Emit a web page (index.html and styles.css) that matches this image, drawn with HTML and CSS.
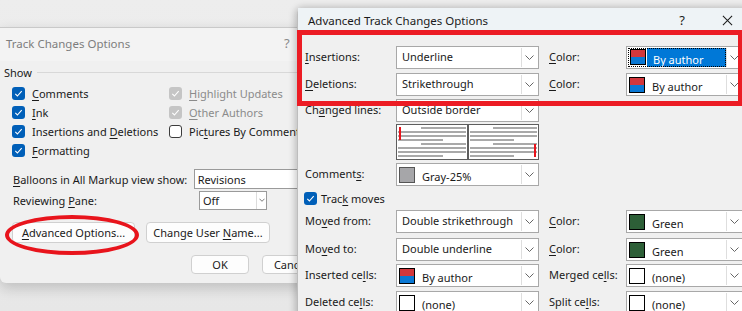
FILE: index.html
```html
<!DOCTYPE html>
<html lang="en">
<head>
  <meta charset="UTF-8" />
  <title>Track Changes Options</title>
  <link rel="stylesheet" href="styles.css">
</head>
<body>
  <div class="desktop">

    <!-- back window: Track Changes Options -->
    <section class="dlg dlg-back">
      <header class="tb tb-back">
        <span class="tb-title">Track Changes Options</span>
        <span class="tb-help">?</span>
      </header>
      <div class="back-body">
        <div class="group-head"><span>Show</span><i class="rule"></i></div>
        <div class="show-grid">
          <div class="chk"><span class="box on"><svg viewBox="0 0 13 13"><path d="M3.3 6.9l2.1 2.1 4.3-4.8"/></svg></span><span><u>C</u>omments</span></div>
          <div class="chk dis"><span class="box dim"><svg viewBox="0 0 13 13"><path d="M3.3 6.9l2.1 2.1 4.3-4.8"/></svg></span><span><u>H</u>ighlight Updates</span></div>
          <div class="chk"><span class="box on"><svg viewBox="0 0 13 13"><path d="M3.3 6.9l2.1 2.1 4.3-4.8"/></svg></span><span><u>I</u>nk</span></div>
          <div class="chk dis"><span class="box dim"><svg viewBox="0 0 13 13"><path d="M3.3 6.9l2.1 2.1 4.3-4.8"/></svg></span><span><u>O</u>ther Authors</span></div>
          <div class="chk"><span class="box on"><svg viewBox="0 0 13 13"><path d="M3.3 6.9l2.1 2.1 4.3-4.8"/></svg></span><span>Insertions and <u>D</u>eletions</span></div>
          <div class="chk"><span class="box off"></span><span>Pic<u>t</u>ures By Comments</span></div>
          <div class="chk"><span class="box on"><svg viewBox="0 0 13 13"><path d="M3.3 6.9l2.1 2.1 4.3-4.8"/></svg></span><span><u>F</u>ormatting</span></div>
        </div>

        <div class="field-row first">
          <span class="field-lbl"><u>B</u>alloons in All Markup view show:</span>
          <div class="combo-s wide"><span class="val">Revisions</span></div>
        </div>
        <div class="field-row">
          <span class="field-lbl">Reviewing <u>P</u>ane:</span>
          <div class="combo-s small">
            <span class="val">Off</span>
            <span class="drop-s"><svg viewBox="0 0 7 4"><path d="M0.5 0.5l3 3 3-3"/></svg></span>
          </div>
        </div>

        <div class="btn-row">
          <button class="btn adv"><u>A</u>dvanced Options...</button>
          <button class="btn user">Change User <u>N</u>ame...</button>
        </div>
        <div class="ok-row">
          <button class="btn ok">OK</button>
          <button class="btn ok">Cancel</button>
        </div>
      </div>
      <span class="ring"></span>
    </section>

    <!-- front window: Advanced Track Changes Options -->
    <section class="dlg dlg-front">
      <header class="tb tb-front">
        <span class="tb-title">Advanced Track Changes Options</span>
        <span class="tb-help">?</span>
        <span class="tb-close"><svg viewBox="0 0 12 12"><path d="M1 1l10 10M11 1L1 11"/></svg></span>
      </header>
      <div class="adv-body">
        <div class="adv-grid">
          <span class="lab"><u>I</u>nsertions:</span>
          <div class="combo"><span class="val">Underline</span><span class="drop"><svg viewBox="0 0 9 5"><path d="M0.5 0.5l4 4 4-4"/></svg></span></div>
          <span class="lab r"><u>C</u>olor:</span>
          <div class="combo"><span class="val color sel"><span class="sw bya"></span><span class="txt">By author</span></span><span class="drop"><svg viewBox="0 0 9 5"><path d="M0.5 0.5l4 4 4-4"/></svg></span></div>

          <span class="lab"><u>D</u>eletions:</span>
          <div class="combo"><span class="val">Strikethrough</span><span class="drop"><svg viewBox="0 0 9 5"><path d="M0.5 0.5l4 4 4-4"/></svg></span></div>
          <span class="lab r"><u>C</u>olor:</span>
          <div class="combo"><span class="val color"><span class="sw bya"></span><span class="txt">By author</span></span><span class="drop"><svg viewBox="0 0 9 5"><path d="M0.5 0.5l4 4 4-4"/></svg></span></div>

          <span class="lab">Ch<u>a</u>nged lines:</span>
          <div class="combo"><span class="val">Outside border</span><span class="drop"><svg viewBox="0 0 9 5"><path d="M0.5 0.5l4 4 4-4"/></svg></span></div>
          <span></span><span></span>

          <span></span>
          <div class="preview">
            <div class="page">
              <i class="ln rt"></i><i class="ln"></i><i class="ln"></i><i class="ln sh"></i>
              <i class="ln rt"></i><i class="ln"></i><i class="ln"></i><i class="ln sh"></i>
              <b class="mark left"></b>
            </div>
            <div class="page">
              <i class="ln rt"></i><i class="ln"></i><i class="ln"></i><i class="ln sh"></i>
              <i class="ln rt"></i><i class="ln"></i><i class="ln"></i><i class="ln sh"></i>
              <b class="mark right"></b>
            </div>
          </div>
          <span></span><span></span>

          <span class="lab">Comment<u>s</u>:</span>
          <div class="combo"><span class="val color"><span class="sw gray"></span><span class="txt">Gray-25%</span></span><span class="drop"><svg viewBox="0 0 9 5"><path d="M0.5 0.5l4 4 4-4"/></svg></span></div>
          <span></span><span></span>

          <div class="chk track"><span class="box on"><svg viewBox="0 0 13 13"><path d="M3.3 6.9l2.1 2.1 4.3-4.8"/></svg></span><span>Trac<u>k</u> moves</span></div>
          <span></span><span></span>

          <span class="lab">Mo<u>v</u>ed from:</span>
          <div class="combo"><span class="val">Double strikethrough</span><span class="drop"><svg viewBox="0 0 9 5"><path d="M0.5 0.5l4 4 4-4"/></svg></span></div>
          <span class="lab r"><u>C</u>olor:</span>
          <div class="combo"><span class="val color"><span class="sw green"></span><span class="txt">Green</span></span><span class="drop"><svg viewBox="0 0 9 5"><path d="M0.5 0.5l4 4 4-4"/></svg></span></div>

          <span class="lab">Mo<u>v</u>ed to:</span>
          <div class="combo"><span class="val">Double underline</span><span class="drop"><svg viewBox="0 0 9 5"><path d="M0.5 0.5l4 4 4-4"/></svg></span></div>
          <span class="lab r"><u>C</u>olor:</span>
          <div class="combo"><span class="val color"><span class="sw green"></span><span class="txt">Green</span></span><span class="drop"><svg viewBox="0 0 9 5"><path d="M0.5 0.5l4 4 4-4"/></svg></span></div>

          <span class="lab">Inserted ce<u>l</u>ls:</span>
          <div class="combo"><span class="val color"><span class="sw bya"></span><span class="txt">By author</span></span><span class="drop"><svg viewBox="0 0 9 5"><path d="M0.5 0.5l4 4 4-4"/></svg></span></div>
          <span class="lab r">Merged ce<u>l</u>ls:</span>
          <div class="combo"><span class="val color"><span class="sw none"></span><span class="txt">(none)</span></span><span class="drop"><svg viewBox="0 0 9 5"><path d="M0.5 0.5l4 4 4-4"/></svg></span></div>

          <span class="lab">Deleted ce<u>l</u>ls:</span>
          <div class="combo"><span class="val color"><span class="sw none"></span><span class="txt">(none)</span></span><span class="drop"><svg viewBox="0 0 9 5"><path d="M0.5 0.5l4 4 4-4"/></svg></span></div>
          <span class="lab r">Split ce<u>l</u>ls:</span>
          <div class="combo"><span class="val color"><span class="sw none"></span><span class="txt">(none)</span></span><span class="drop"><svg viewBox="0 0 9 5"><path d="M0.5 0.5l4 4 4-4"/></svg></span></div>
        </div>
      </div>
      <span class="callout"></span>
    </section>

  </div>
</body>
</html>
```

FILE: styles.css
```css
* {
  box-sizing: border-box;
}

body {
  margin: 0;
  font-family: "Segoe UI", "Noto Sans", sans-serif;
  font-size: 11px;
  line-height: 15px;
  color: #1a1a1a;
}

u {
  text-decoration: underline;
  text-underline-offset: 2px;
  text-decoration-thickness: 1px;
}

.desktop {
  position: relative;
  width: 742px;
  height: 311px;
  overflow: hidden;
  background: linear-gradient(#ededed, #e7e7e7);
}

.dlg {
  position: absolute;
  background: #f0f0f0;
}

/* title bars */
.tb {
  display: flex;
  align-items: center;
  white-space: nowrap;
}

.tb-back {
  height: 33px;
  padding: 0 0 2px 6px;
  background: #f3f3f3;
  color: #7d7d7d;
  font-size: 11.5px;
}

.tb-back .tb-title {
  width: 278px;
}

.tb-back .tb-help {
  font-size: 13px;
  color: #8a8a8a;
}

.tb-front {
  height: 25px;
  padding-left: 10px;
  background: #eef3f6;
  font-size: 11.5px;
}

.tb-front .tb-title {
  flex: 1;
}

.tb-front .tb-help {
  width: 20px;
  margin-right: 12px;
  text-align: center;
  font-size: 13px;
}

.tb-close {
  width: 46px;
  display: flex;
  justify-content: center;
}

.tb-close svg {
  width: 11px;
  height: 11px;
}

.tb-close path {
  stroke: #1a1a1a;
  stroke-width: 1.1;
}

/* back dialog */
.dlg-back {
  left: 0;
  top: 27px;
  width: 320px;
  height: 256px;
  border-top: 1px solid #c9c9c9;
  border-radius: 0 0 0 6px;
  box-shadow: 0 5px 14px rgba(0, 0, 0, 0.18);
}

.back-body {
  padding: 3px 0 0 4px;
}

.group-head {
  display: flex;
  align-items: center;
  gap: 5px;
  height: 16px;
}

.group-head .rule {
  flex: 1;
  height: 1px;
  margin-top: 1px;
  background: #d8d8d8;
}

.show-grid {
  display: grid;
  grid-template-columns: 157px auto;
  grid-auto-rows: 19px;
  margin-top: 4px;
  padding-left: 8px;
}

.chk {
  display: flex;
  align-items: center;
  gap: 7px;
  white-space: nowrap;
}

.chk.dis {
  color: #8b8b8b;
}

.box {
  width: 13px;
  height: 13px;
  flex: none;
  border-radius: 3px;
  display: inline-flex;
}

.box.on {
  background: #005fb8;
}

.box.dim {
  background: #c5c5c5;
}

.box.off {
  background: #fff;
  border: 1px solid #3c3c3c;
}

.box svg {
  width: 13px;
  height: 13px;
}

.box path {
  fill: none;
  stroke: #fff;
  stroke-width: 1.1;
}

.field-row {
  display: flex;
  align-items: center;
  height: 20px;
  margin-top: 1px;
  padding-left: 9px;
  white-space: nowrap;
}

.field-row.first {
  margin-top: 9px;
}

.field-lbl {
  width: 186px;
}

.combo-s {
  display: flex;
  height: 20px;
  background: #fff;
  border: 1px solid #9a9a9a;
}

.combo-s .val {
  flex: 1;
  padding-left: 3px;
  display: flex;
  align-items: center;
}

.combo-s.wide {
  width: 130px;
}

.combo-s.small {
  width: 68px;
  height: 19px;
}

.drop-s {
  width: 10px;
  border-left: 1px solid #dcdcdc;
  display: flex;
  align-items: center;
  justify-content: center;
}

.drop-s svg {
  width: 6px;
  height: 4px;
}

.drop-s path,
.drop path {
  fill: none;
  stroke: #666;
  stroke-width: 1;
}

.btn-row {
  display: flex;
  gap: 11px;
  margin-top: 12px;
  padding-left: 8px;
}

.ok-row {
  display: flex;
  gap: 13px;
  margin-top: 12px;
  padding-left: 187px;
}

.btn {
  height: 21px;
  padding: 0 0 1px;
  font: inherit;
  color: #1a1a1a;
  background: #fdfdfd;
  border: 1px solid #d0d0d0;
  border-radius: 4px;
}

.btn.adv {
  width: 123px;
}

.btn.user {
  width: 124px;
}

.btn.ok {
  width: 72px;
  height: 19px;
}

.ring {
  position: absolute;
  left: 5px;
  top: 187px;
  width: 134px;
  height: 40px;
  border: 4px solid #e8141c;
  border-radius: 50%;
}

/* front dialog */
.dlg-front {
  left: 297px;
  top: 7px;
  width: 453px;
  height: 310px;
  border-left: 1px solid #bdbdbd;
  border-top: 1px solid #d0d0d0;
  border-radius: 8px 0 0 0;
  box-shadow: -2px 0 7px rgba(0, 0, 0, 0.22);
}

.adv-body {
  padding: 13px 0 0 7px;
}

.adv-grid {
  display: grid;
  grid-template-columns: 91px 143px 87px 118px;
  grid-template-rows: 27px 26px 25px 39px 24px 23px 28px 26px 27px 23px;
  white-space: nowrap;
}

.lab {
  height: 23px;
  padding-bottom: 2px;
  display: flex;
  align-items: center;
}

.lab.r {
  padding-left: 10px;
}

.combo {
  display: flex;
  height: 23px;
  background: #fff;
  border: 1px solid #a8a8a8;
}

.combo .val {
  flex: 1;
  min-width: 0;
  padding: 0 0 2px 5px;
  display: flex;
  align-items: center;
  overflow: hidden;
}

.combo .val.color {
  padding: 0 0 0 2px;
  align-items: flex-start;
}

.sw {
  width: 16px;
  height: 16px;
  margin-top: 3px;
  flex: none;
  border: 1px solid #000;
}

.sw.bya {
  background: linear-gradient(#d2373c 50%, #0a78d4 50%);
}

.sw.gray {
  background: #a6a6a9;
  border-color: #555;
}

.sw.green {
  background: #2d5f37;
}

.sw.none {
  background: #fff;
}

.val .txt {
  padding: 5px 0 0 7px;
}

.val.sel {
  margin: 1px 0 1px 1px;
  padding-left: 1px;
  color: #fff;
  background: linear-gradient(to right, transparent 19px, #0078d7 19px);
  outline: 1px dotted #000;
  outline-offset: -1px;
}

.val.sel .sw {
  margin-top: 1px;
}

.val.sel .txt {
  padding-top: 4px;
  padding-left: 7px;
}

.drop {
  width: 16px;
  flex: none;
  margin: 1px 1px 1px 0;
  border-left: 1px solid #dedede;
  display: flex;
  align-items: center;
  justify-content: center;
}

.drop svg {
  width: 9px;
  height: 5px;
}

.preview {
  display: flex;
  height: 36px;
  border: 1px solid #5e5e5e;
  background: #5e5e5e;
  gap: 2px;
}

.page {
  position: relative;
  flex: 1;
  padding: 2px 1px 0;
  background: #fff;
}

.ln {
  display: block;
  height: 2px;
  margin-bottom: 2px;
  background: #a9a9a9;
}

.ln.rt {
  margin-left: 23px;
}

.ln.sh {
  margin-right: 23px;
}

.mark {
  position: absolute;
  width: 2px;
  height: 13px;
  background: #e8141c;
}

.mark.left {
  left: 2px;
  top: 2px;
}

.mark.right {
  right: 2px;
  top: 19px;
}

.chk.track {
  grid-column: 1 / span 2;
  gap: 4px;
  height: 23px;
  margin-left: -1px;
  padding-bottom: 1px;
}

.callout {
  position: absolute;
  left: -1px;
  top: 22px;
  width: 446px;
  height: 76px;
  border: 5px solid #ec1c24;
}
```
